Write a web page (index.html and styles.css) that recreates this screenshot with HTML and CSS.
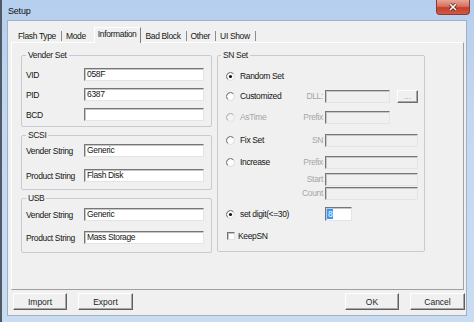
FILE: index.html
```html
<!DOCTYPE html>
<html>
<head>
<meta charset="utf-8">
<title>Setup</title>
<link rel="stylesheet" href="styles.css">
</head>
<body>
<div class="window">
  <div class="titlebar">
    <span class="title">Setup</span>
    <div class="close">
      <svg width="10" height="8" viewBox="0 0 10 8"><path d="M2 1L8 7M8 1L2 7" stroke="#5a1a14" stroke-width="3"/><path d="M2 1L8 7M8 1L2 7" stroke="#fff" stroke-width="1.6"/></svg>
    </div>
  </div>
  <div class="client">
    <div class="tabs">
      <div class="tab first">Flash Type</div>
      <div class="tab nosep">Mode</div>
      <div class="tab active">Information</div>
      <div class="tab">Bad Block</div>
      <div class="tab">Other</div>
      <div class="tab">UI Show</div>
    </div>
    <div class="panel">
      <div class="leftcol">
        <fieldset class="group vender">
          <legend>Vender Set</legend>
          <div class="form">
            <span>VID</span><div class="edit">058F</div>
            <span>PID</span><div class="edit">6387</div>
            <span>BCD</span><div class="edit"></div>
          </div>
        </fieldset>
        <fieldset class="group scsi">
          <legend>SCSI</legend>
          <div class="form">
            <span>Vender String</span><div class="edit">Generic</div>
            <span>Product String</span><div class="edit">Flash Disk</div>
          </div>
        </fieldset>
        <fieldset class="group usb">
          <legend>USB</legend>
          <div class="form">
            <span>Vender String</span><div class="edit">Generic</div>
            <span>Product String</span><div class="edit">Mass Storage</div>
          </div>
        </fieldset>
      </div>
      <fieldset class="group snset">
        <legend>SN Set</legend>
        <div class="sngrid">
          <div class="opt"><svg class="radio" width="9" height="9" viewBox="0 0 9 9"><circle cx="4.5" cy="4.5" r="4" fill="#fff" stroke="#dadada"/><path d="M1.67 7.33A4 4 0 0 1 7.33 1.67" fill="none" stroke="#6e6e6e"/><circle cx="4.5" cy="4.5" r="1.6" fill="#111"/></svg><span>Random Set</span></div>
          <div></div><div></div>

          <div class="opt"><svg class="radio" width="9" height="9" viewBox="0 0 9 9"><circle cx="4.5" cy="4.5" r="4" fill="#fff" stroke="#dadada"/><path d="M1.67 7.33A4 4 0 0 1 7.33 1.67" fill="none" stroke="#6e6e6e"/></svg><span>Customized</span></div>
          <div class="lbl">DLL:</div>
          <div class="cell"><div class="edit disabled short"></div><button class="dots">...</button></div>

          <div class="opt off"><svg class="radio" width="9" height="9" viewBox="0 0 9 9"><circle cx="4.5" cy="4.5" r="4" fill="#f4f4f4" stroke="#e2e2e2"/><path d="M1.67 7.33A4 4 0 0 1 7.33 1.67" fill="none" stroke="#adadad"/></svg><span>AsTime</span></div>
          <div class="lbl">Prefix</div>
          <div class="cell"><div class="edit disabled short"></div></div>

          <div class="opt"><svg class="radio" width="9" height="9" viewBox="0 0 9 9"><circle cx="4.5" cy="4.5" r="4" fill="#fff" stroke="#dadada"/><path d="M1.67 7.33A4 4 0 0 1 7.33 1.67" fill="none" stroke="#6e6e6e"/></svg><span>Fix Set</span></div>
          <div class="lbl">SN</div>
          <div class="cell"><div class="edit disabled long"></div></div>

          <div class="opt"><svg class="radio" width="9" height="9" viewBox="0 0 9 9"><circle cx="4.5" cy="4.5" r="4" fill="#fff" stroke="#dadada"/><path d="M1.67 7.33A4 4 0 0 1 7.33 1.67" fill="none" stroke="#6e6e6e"/></svg><span>Increase</span></div>
          <div class="lbl">Prefix</div>
          <div class="cell"><div class="edit disabled long"></div></div>

          <div></div>
          <div class="lbl">Start</div>
          <div class="cell"><div class="edit disabled long"></div></div>

          <div></div>
          <div class="lbl">Count</div>
          <div class="cell"><div class="edit disabled long"></div></div>

          <div class="opt"><svg class="radio" width="9" height="9" viewBox="0 0 9 9"><circle cx="4.5" cy="4.5" r="4" fill="#fff" stroke="#dadada"/><path d="M1.67 7.33A4 4 0 0 1 7.33 1.67" fill="none" stroke="#6e6e6e"/><circle cx="4.5" cy="4.5" r="1.6" fill="#111"/></svg><span>set digit(&lt;=30)</span></div>
          <div></div>
          <div class="cell"><div class="edit digit"><span class="sel">8</span></div></div>

          <div class="opt check"><span class="checkbox"></span><span>KeepSN</span></div>
          <div></div><div></div>
        </div>
      </fieldset>
    </div>
    <div class="buttons">
      <button class="btn">Import</button>
      <button class="btn wide">Export</button>
      <div class="spacer"></div>
      <button class="btn">OK</button>
      <button class="btn wide">Cancel</button>
    </div>
  </div>
</div>
</body>
</html>
```
FILE: styles.css
```css
html, body {
  margin: 0;
  padding: 0;
}
body {
  font-family: "Liberation Sans", Arial, sans-serif;
  font-size: 8.5px;
  letter-spacing: -0.35px;
  color: #151515;
  background: #c4d7ef;
}
.window {
  width: 474px;
  height: 322px;
  box-sizing: border-box;
  border-left: 2px solid #4f5a66;
  background: linear-gradient(to bottom, #b6cfee 0%, #c4d8f1 40%, #c9dcf2 100%);
  display: flex;
  flex-direction: column;
}
.titlebar {
  height: 20px;
  flex: none;
  display: flex;
  align-items: flex-start;
  justify-content: space-between;
  padding: 0 4px 0 6px;
}
.title {
  font-size: 9px;
  letter-spacing: -0.2px;
  line-height: 22px;
  color: #111;
}
.close {
  width: 34px;
  height: 15px;
  box-sizing: border-box;
  border: 1px solid #8a3a30;
  border-top: none;
  border-radius: 0 0 4px 4px;
  background: linear-gradient(to bottom, #e8a597 0%, #d8715f 45%, #c43f2c 55%, #d15a44 100%);
  display: flex;
  align-items: center;
  justify-content: center;
}
.client {
  flex: 1;
  margin: 0 7px 6px 5px;
  border: 1px solid #9fb1c6;
  background: #f0f0f0;
  display: flex;
  flex-direction: column;
}
.tabs {
  position: relative;
  z-index: 1;
  height: 21px;
  flex: none;
  display: flex;
  align-items: flex-end;
  margin-left: 3px;
}
.tab {
  height: 10px;
  line-height: 10px;
  padding: 0 5px 0 4px;
  border-right: 1px solid #8c8c8c;
  margin-bottom: 1px;
  white-space: nowrap;
}
.tab.first {
  padding-left: 7px;
}
.tab.nosep {
  border-right-color: transparent;
}
.tab.active {
  height: 15px;
  line-height: 12px;
  margin: 0 0 -1px 2px;
  padding: 0 4px 0 3px;
  background: #f0f0f0;
  border-top: 1px solid #fff;
  border-left: 1px solid #fff;
  border-right: 1px solid #7d7d7d;
}
.panel {
  height: 248px;
  box-sizing: border-box;
  margin: 0 2px 0 3px;
  border: 1px solid;
  border-color: #fff #a0a0a0 #a0a0a0 #fff;
  padding: 7px 0 0 9px;
  display: flex;
  align-items: flex-start;
  gap: 5px;
}
.leftcol {
  width: 191px;
  display: flex;
  flex-direction: column;
}
.group {
  margin: 0;
  min-width: 0;
  border: 1px solid #c6cbd0;
  border-radius: 2px;
}
.group legend {
  padding: 0 2px;
  line-height: 10px;
  color: #1a1a1a;
}
.form {
  display: grid;
  grid-template-columns: 58px 120px;
  align-items: center;
}
.form span {
  white-space: nowrap;
}
.vender {
  padding: 8px 0 5px 4px;
}
.vender .form {
  row-gap: 7px;
}
.scsi {
  margin-top: 3px;
  padding: 4px 0 7px 4px;
}
.scsi .form {
  row-gap: 12px;
}
.usb {
  margin-top: 3px;
  padding: 5px 0 8px 4px;
}
.usb .form {
  row-gap: 10px;
}
.edit {
  height: 13px;
  box-sizing: border-box;
  background: #fff;
  border: 1px solid;
  border-color: #767676 #e4e4e4 #e4e4e4 #767676;
  box-shadow: inset 1px 1px 0 #c6c6c6;
  padding-left: 2px;
  line-height: 11px;
  white-space: nowrap;
  overflow: hidden;
}
.edit.disabled {
  background: #f0f0f0;
}
.edit.short {
  width: 65px;
}
.edit.long {
  width: 93px;
}
.edit.digit {
  width: 27px;
  height: 14px;
  line-height: 12px;
  padding-left: 1px;
}
.sel {
  background: #3399ff;
  color: #fff;
  padding: 0 1px;
}
.snset {
  width: 208px;
  box-sizing: border-box;
  padding: 6px 4px 7px 8px;
}
.snset legend {
  margin-left: -5px;
}
.sngrid {
  display: grid;
  grid-template-columns: 74px 25px 1fr;
  grid-template-rows: 20px 20px 22px 24px 20px 14px 14px 28px 16px;
  align-items: center;
}
.opt {
  display: flex;
  align-items: center;
  gap: 5px;
  white-space: nowrap;
}
.opt.off {
  color: #a6a6a6;
}
.opt.check {
  gap: 3px;
  padding-left: 1px;
}
.radio {
  display: block;
  flex: none;
}
.checkbox {
  width: 8px;
  height: 8px;
  box-sizing: border-box;
  background: #fff;
  border: 1px solid;
  border-color: #747474 #e2e2e2 #e2e2e2 #747474;
  box-shadow: inset 1px 1px 0 #c4c4c4;
}
.lbl {
  text-align: right;
  padding-right: 2px;
  color: #a6a6a6;
  white-space: nowrap;
}
.cell {
  display: flex;
  align-items: center;
  gap: 7px;
}
.dots {
  width: 21px;
  height: 13px;
  padding: 0;
  font: inherit;
  line-height: 8px;
  color: #a6a6a6;
  background: #f0f0f0;
  border: 1px solid;
  border-color: #fff #6e6e6e #6e6e6e #fff;
  box-shadow: inset -1px -1px 0 #a6a6a6;
}
.buttons {
  display: flex;
  gap: 11px;
  margin-top: 3px;
  padding: 0 1px 0 5px;
}
.spacer {
  flex: 1;
}
.btn {
  width: 54px;
  height: 17px;
  padding: 0;
  font: inherit;
  color: #1e1e1e;
  background: #f0f0f0;
  border: 1px solid;
  border-color: #fff #5f5f5f #5f5f5f #fff;
  box-shadow: inset -1px -1px 0 #a8a8a8;
}
.btn.wide {
  width: 55px;
}
```
